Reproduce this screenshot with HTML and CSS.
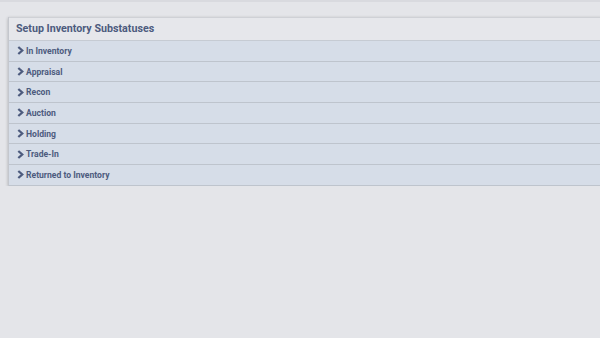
FILE: index.html
```html
<!DOCTYPE html>
<html>
<head>
<meta charset="utf-8">
<link rel="stylesheet" href="styles.css">
</head>
<body>
<div class="topbar"></div>
<div class="panel">
  <div class="panel-header">Setup Inventory Substatuses</div>
  <div class="row"><svg class="chev" viewBox="0 0 8 10"><path d="M1.5 1 L6 5 L1.5 9" /></svg><span>In Inventory</span></div>
  <div class="row"><svg class="chev" viewBox="0 0 8 10"><path d="M1.5 1 L6 5 L1.5 9" /></svg><span>Appraisal</span></div>
  <div class="row"><svg class="chev" viewBox="0 0 8 10"><path d="M1.5 1 L6 5 L1.5 9" /></svg><span>Recon</span></div>
  <div class="row"><svg class="chev" viewBox="0 0 8 10"><path d="M1.5 1 L6 5 L1.5 9" /></svg><span>Auction</span></div>
  <div class="row"><svg class="chev" viewBox="0 0 8 10"><path d="M1.5 1 L6 5 L1.5 9" /></svg><span>Holding</span></div>
  <div class="row"><svg class="chev" viewBox="0 0 8 10"><path d="M1.5 1 L6 5 L1.5 9" /></svg><span>Trade-In</span></div>
  <div class="row"><svg class="chev" viewBox="0 0 8 10"><path d="M1.5 1 L6 5 L1.5 9" /></svg><span>Returned to Inventory</span></div>
</div>
</body>
</html>
```
FILE: styles.css
```css
html, body {
  margin: 0;
  padding: 0;
  background: #e4e5e9;
  font-family: Roboto, "Liberation Sans", sans-serif;
  overflow: hidden;
}
.topbar {
  height: 2px;
  background: #d9dadf;
}
.panel {
  margin: 15px 0 0 8px;
  width: 600px;
  background: #d6dde8;
  border-left: 1px solid #c4c7cd;
  box-shadow: 0 1px 3px rgba(0,0,0,0.25);
}
.panel-header {
  height: 22px;
  line-height: 22px;
  padding-left: 7px;
  background: #e6e7eb;
  color: #4d5b7e;
  font-weight: 700;
  font-size: 10.7px;
  border-top: 1px solid #cfd1d6;
  border-bottom: 1px solid #c6cbd3;
}
.row {
  height: 19.7px;
  display: flex;
  align-items: center;
  padding-left: 8px;
  color: #4d5b7e;
  font-size: 8.6px;
  font-weight: 700;
  border-bottom: 1px solid #bec4cd;
}
.chev {
  width: 7px;
  height: 9px;
  margin-right: 2px;
}
.chev path {
  fill: none;
  stroke: #4d5b7e;
  stroke-width: 2.6;
}
```
